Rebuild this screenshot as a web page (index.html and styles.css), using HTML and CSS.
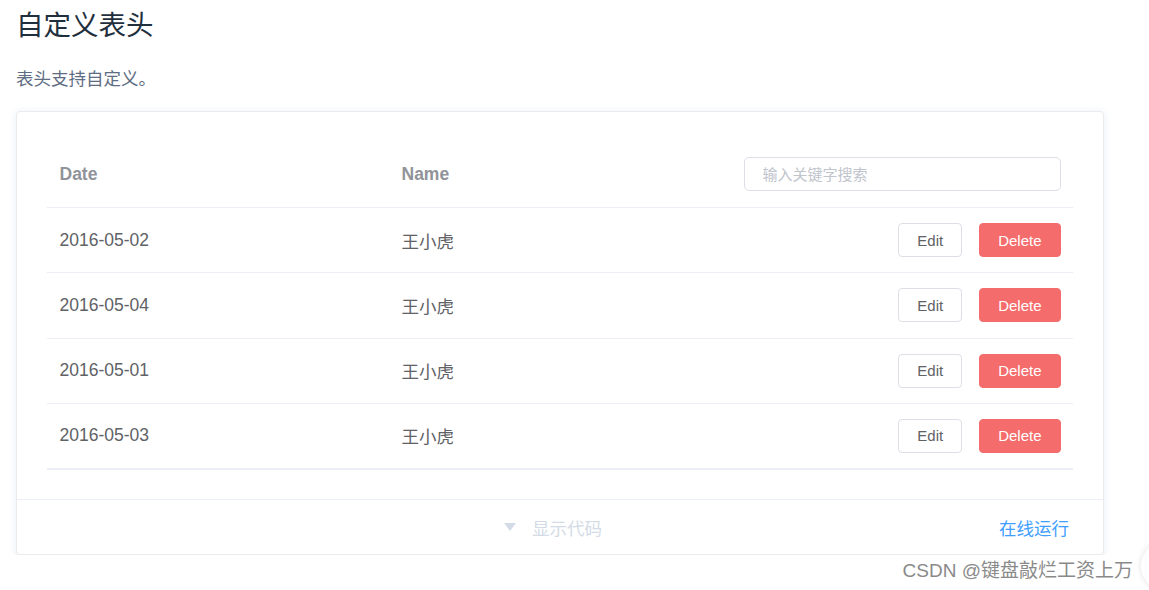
FILE: index.html
```html
<!DOCTYPE html>
<html lang="zh-CN">
<head>
    <meta charset="UTF-8">
    <meta name="viewport" content="width=device-width, initial-scale=1.0">
    <title>自定义表头</title>
    <link rel="stylesheet" href="styles.css">
</head>
<body>
    <div class="page">
        <h3 class="title">自定义表头</h3>
        <p class="intro">表头支持自定义。</p>

        <div class="demo-block">
            <div class="demo-source">
                <div class="table">
                    <div class="row head">
                        <div class="cell">Date</div>
                        <div class="cell">Name</div>
                        <div class="cell right">
                            <input class="search" type="text" placeholder="输入关键字搜索">
                        </div>
                    </div>
                    <div class="row">
                        <div class="cell date">2016-05-02</div>
                        <div class="cell">王小虎</div>
                        <div class="cell right">
                            <button class="btn">Edit</button>
                            <button class="btn btn-danger">Delete</button>
                        </div>
                    </div>
                    <div class="row">
                        <div class="cell date">2016-05-04</div>
                        <div class="cell">王小虎</div>
                        <div class="cell right">
                            <button class="btn">Edit</button>
                            <button class="btn btn-danger">Delete</button>
                        </div>
                    </div>
                    <div class="row">
                        <div class="cell date">2016-05-01</div>
                        <div class="cell">王小虎</div>
                        <div class="cell right">
                            <button class="btn">Edit</button>
                            <button class="btn btn-danger">Delete</button>
                        </div>
                    </div>
                    <div class="row">
                        <div class="cell date">2016-05-03</div>
                        <div class="cell">王小虎</div>
                        <div class="cell right">
                            <button class="btn">Edit</button>
                            <button class="btn btn-danger">Delete</button>
                        </div>
                    </div>
                </div>
            </div>
            <div class="demo-control">
                <span></span>
                <div class="toggle">
                    <svg class="caret" width="12" height="8" viewBox="0 0 12 8"><path d="M0 0H12L6 8Z" fill="#d3dce6"/></svg>
                    <span>显示代码</span>
                </div>
                <a class="run-link" href="#">在线运行</a>
            </div>
        </div>
    </div>

    <div class="watermark">CSDN @键盘敲烂工资上万</div>
    <div class="float-btn"></div>
</body>
</html>
```

FILE: styles.css
```css
body {
    margin: 0;
    font-family: "Liberation Sans", "Noto Sans CJK SC", sans-serif;
    background-color: #fff;
    color: #606266;
}

.page {
    padding: 0 16px;
    width: 1088px;
}

.title {
    margin: 5px 0 0;
    font-size: 27.5px;
    font-weight: normal;
    line-height: 42px;
    color: #1f2f3d;
}

.intro {
    margin: 19px 0 19px;
    font-size: 17.5px;
    line-height: 26px;
    color: #5e6d82;
}

.demo-block {
    border: 1px solid #ebebeb;
    border-radius: 4px;
    box-shadow: 0 0 8px 0 rgba(232, 237, 250, .6), 0 2px 4px 0 rgba(232, 237, 250, .5);
    background-color: #fff;
}

.demo-source {
    padding: 29px 30px 29px;
}

.table {
    border-bottom: 1px solid #ebeef5;
}

.row {
    display: grid;
    grid-template-columns: repeat(3, 1fr);
    align-items: center;
    height: 65.25px;
    box-sizing: border-box;
    border-bottom: 1px solid #ebeef5;
    font-size: 17.5px;
}

.row.head {
    height: 67px;
    font-weight: bold;
    color: #909399;
}

.cell {
    padding: 0 12.5px;
}

.cell.right {
    display: flex;
    justify-content: flex-end;
    align-items: center;
}

.search {
    width: 100%;
    height: 34px;
    box-sizing: border-box;
    padding: 0 18px;
    border: 1px solid #dcdfe6;
    border-radius: 5px;
    font-family: "Liberation Sans", "Noto Sans CJK SC", sans-serif;
    font-size: 15px;
    color: #606266;
    outline: none;
}

.search::placeholder {
    color: #c0c4cc;
}

.btn {
    height: 34px;
    padding: 0 18px;
    border: 1px solid #dcdfe6;
    border-radius: 4px;
    background-color: #fff;
    font-family: "Liberation Sans", sans-serif;
    font-size: 15px;
    color: #606266;
    cursor: pointer;
}

.btn + .btn {
    margin-left: 17px;
}

.btn-danger {
    background-color: #f56c6c;
    border-color: #f56c6c;
    color: #fff;
}

.demo-control {
    display: grid;
    grid-template-columns: 1fr auto 1fr;
    align-items: center;
    height: 54px;
    padding: 0 34px;
    border-top: 1px solid #eaeefb;
    font-size: 17.5px;
}

.toggle {
    display: flex;
    align-items: center;
    gap: 16px;
    margin-right: 14px;
    color: #d3dce6;
}

.run-link {
    justify-self: end;
    color: #409eff;
    text-decoration: none;
}

.watermark {
    position: absolute;
    right: 16px;
    top: 557px;
    font-size: 19px;
    line-height: 28px;
    color: #8a8a8a;
    text-shadow: 0 0 2px #fff;
}

.float-btn {
    position: absolute;
    left: 1141px;
    top: 541px;
    width: 50px;
    height: 50px;
    border-radius: 50%;
    background-color: #fff;
    box-shadow: 0 0 6px rgba(0, 0, 0, .12);
}
```
